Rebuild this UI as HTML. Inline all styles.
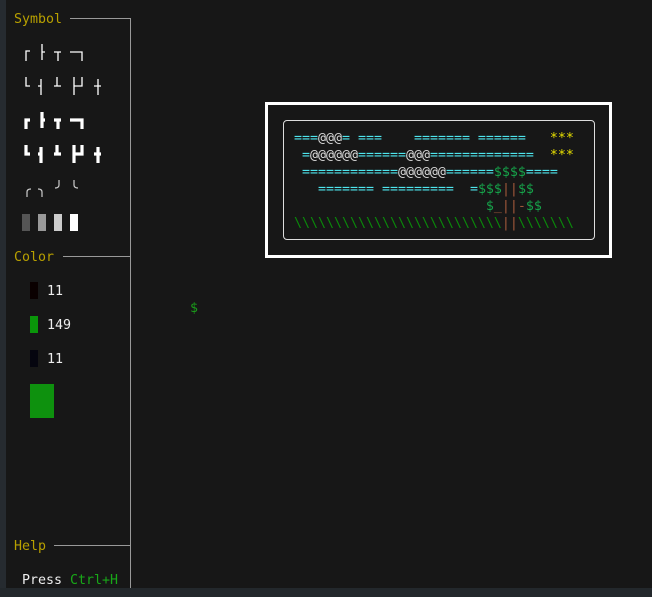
<!DOCTYPE html>
<html><head><style>
*{margin:0;padding:0}
body{width:652px;height:597px;background:#171717;position:relative;overflow:hidden;font-family:"DejaVu Sans Mono","Liberation Mono",monospace;font-size:13.29px;line-height:17px}
.a{position:absolute;white-space:pre;letter-spacing:0}
.y{color:#b8a000}
.w{color:#eee}
.c{color:#4ee6ee}
.g{color:#d8d8d8}
.d{color:#16a34a}
.b{color:#a0583a}
.s{color:#0a8a0a}
.k{color:#e8e000}
</style></head><body>
<div style="position:absolute;left:0;top:0;width:6px;height:597px;background:#262b30"></div>
<div style="position:absolute;left:0;top:588px;width:652px;height:9px;background:#23282c"></div>
<div style="position:absolute;left:130px;top:18px;width:1px;height:570px;background:#999"></div>
<div style="position:absolute;left:70px;top:18px;width:60px;height:1px;background:#999"></div>
<div style="position:absolute;left:63px;top:256px;width:67px;height:1px;background:#999"></div>
<div style="position:absolute;left:54px;top:545px;width:76px;height:1px;background:#999"></div>
<div class="a y" style="left:14px;top:11px">Symbol</div>
<div class="a y" style="left:14px;top:249px">Color</div>
<div class="a y" style="left:14px;top:538px">Help</div>
<div class="a w" style="left:22px;top:572px">Press <span style="color:#18a818">Ctrl+H</span></div>
<svg style="position:absolute;left:0;top:0" width="130" height="240" fill="none" stroke="#fff">
<g stroke-width="1.3">
<path d="M26 61V51H30M42 44V60M42 52H45M54 52H61M58 52V61M70 52H82V61"/>
<path d="M26 77V86H30M41 79V95M38 86H41M57 77V86M54 86H61M74 77V95M82 77V86H74M98 79V95M94 86H101"/>
</g>
<g stroke-width="3.2">
<path d="M26 129V120H30M42 112V128M42 120H45M54 120H61M58 120V129M70 120H82V129"/>
<path d="M26 145V154H30M41 147V163M38 154H41M57 145V154M54 154H61M74 145V163M82 145V154H74M98 147V163M94 154H101"/>
</g>
<g stroke="#ccc" stroke-width="1.2">
<path d="M27 197V192Q27 189 31 189M38 189Q42 189 42 192V197M59 180V185Q59 188 55 188M74 180V185Q74 188 78 188"/>
</g>
<g stroke="none">
<rect x="22" y="214" width="8" height="17" fill="#555"/>
<rect x="38" y="214" width="8" height="17" fill="#999"/>
<rect x="54" y="214" width="8" height="17" fill="#ccc"/>
<rect x="70" y="214" width="8" height="17" fill="#fff"/>
</g>
</svg>
<div style="position:absolute;left:30px;top:282px;width:8px;height:17px;background:#0a0000"></div>
<div style="position:absolute;left:30px;top:316px;width:8px;height:17px;background:#0a960a"></div>
<div style="position:absolute;left:30px;top:350px;width:8px;height:17px;background:#05050f"></div>
<div style="position:absolute;left:30px;top:384px;width:24px;height:34px;background:#0e910e"></div>
<div class="a w" style="left:47px;top:283px">11</div>
<div class="a w" style="left:47px;top:317px">149</div>
<div class="a w" style="left:47px;top:351px">11</div>
<div class="a" style="left:190px;top:300px;color:#1a9a1a">$</div>
<div style="position:absolute;left:265px;top:102px;width:341px;height:150px;border:3px solid #fff"></div>
<div style="position:absolute;left:283px;top:120px;width:310px;height:118px;border:1px solid #ddd;border-radius:4px"></div>
<div class="a" style="left:294px;top:130px"><span class="c">===</span><span class="g">@@@</span><span class="c">= ===    ======= ======</span>   <span class="k">***</span>
 <span class="c">=</span><span class="g">@@@@@@</span><span class="c">======</span><span class="g">@@@</span><span class="c">=============</span>  <span class="k">***</span>
 <span class="c">============</span><span class="g">@@@@@@</span><span class="c">======</span><span class="d">$$$$</span><span class="c">====</span>
   <span class="c">======= =========</span>  <span class="c">=</span><span class="d">$$$</span><span class="b">||</span><span class="d">$$</span>
                        <span class="d">$</span><span class="b">_||-</span><span class="d">$$</span>
<span class="s">\\\\\\\\\\\\\\\\\\\\\\\\\\</span><span class="b">||</span><span class="s">\\\\\\\</span></div>
</body></html>
